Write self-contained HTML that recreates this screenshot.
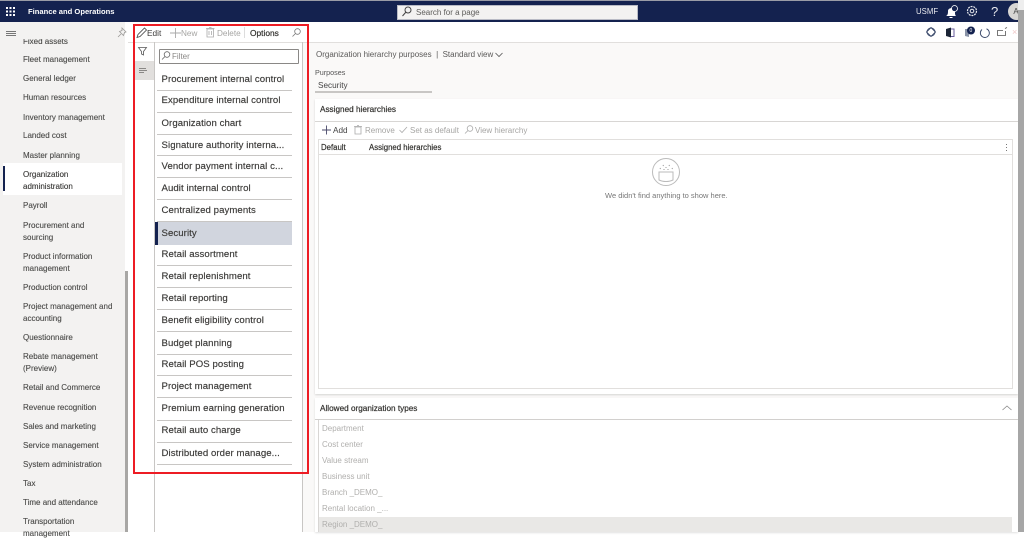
<!DOCTYPE html>
<html><head><meta charset="utf-8"><style>
html,body{margin:0;padding:0;width:1024px;height:532px;overflow:hidden;background:#fff;font-family:"Liberation Sans",sans-serif}
.a{position:absolute;white-space:nowrap}
.nav{position:absolute;left:23px;margin-top:1px;font-size:8px;line-height:12px;color:#4a4a48;white-space:nowrap;-webkit-text-stroke:.12px #4a4a48}
.li{position:absolute;left:161.5px;font-size:9.6px;line-height:12px;color:#3b3a38;white-space:nowrap;letter-spacing:.08px;-webkit-text-stroke:.16px #3b3a38}
.ln{position:absolute;left:157px;width:135px;height:1px;background:#c8c6c4}
.t{position:absolute;white-space:nowrap;font-size:8px;line-height:12px}
.g{color:#a6a5a3}
.org{position:absolute;left:322px;font-size:8px;line-height:12px;color:#b0afad;white-space:nowrap}
.m{-webkit-text-stroke:.2px currentColor}
svg{position:absolute;overflow:visible}
</style></head><body>
<div class="a" style="left:0;top:0;width:1024px;height:1px;background:#9a9ca6"></div>
<div class="a" style="left:0;top:1px;width:1024px;height:21px;background:#14224f"></div>
<svg style="left:6px;top:7px" width="10" height="10"><g fill="#fff"><rect x="0" y="0" width="2" height="2"/><rect x="3.500" y="0" width="2" height="2"/><rect x="7" y="0" width="2" height="2"/><rect x="0" y="3.500" width="2" height="2"/><rect x="3.500" y="3.500" width="2" height="2"/><rect x="7" y="3.500" width="2" height="2"/><rect x="0" y="7" width="2" height="2"/><rect x="3.500" y="7" width="2" height="2"/><rect x="7" y="7" width="2" height="2"/></g></svg>
<div class="t" style="left:28px;top:6px;color:#fff;font-weight:bold;font-size:7.600px">Finance and Operations</div>
<div class="a" style="left:397px;top:4.500px;width:239px;height:13px;background:#f3f2f1;border:1px solid #b9bbc5"></div>
<svg style="left:401px;top:6px" width="12" height="12" fill="none" stroke="#444"><circle cx="7" cy="4" r="3"/><path d="M5 6L1.500 10"/></svg>
<div class="t" style="left:416px;top:6.500px;color:#5d5c5a">Search for a page</div>
<div class="t" style="left:916px;top:6px;color:#e8e9ee;font-size:7.800px">USMF</div>
<svg style="left:945px;top:5px" width="14" height="14"><path d="M1 11C3 10 3 8 3 6C3 4 5 3 7 3C9 3 10 5 10 7C10 9 10 10 11 11Z" fill="#fff"/><circle cx="9.500" cy="3.500" r="3" fill="#14224f" stroke="#fff" stroke-width=".8"/><path d="M4.500 12h3v1h-3z" fill="#fff"/></svg>
<svg style="left:966px;top:5px" width="12" height="12" fill="none" stroke="#e8e9ee"><circle cx="6" cy="6" r="1.800"/><circle cx="6" cy="6" r="4.500" stroke-width="1.200" stroke-dasharray="2 .8"/></svg>
<div class="t" style="left:991px;top:4px;color:#e8e9ee;font-size:13px;line-height:15px">?</div>

<div class="a" style="left:0;top:22px;width:125px;height:510px;background:#f3f2f1"></div>
<svg style="left:6px;top:30.500px" width="11" height="5"><path d="M0 .5h10M0 2.500h10M0 4.500h10" stroke="#777" stroke-width="1"/></svg>
<svg style="left:117px;top:27px" width="11" height="11" fill="none" stroke="#9b9a98" stroke-width=".8"><path d="M5 1L9 5L7.500 5.500L6.500 8.500L2.500 4.500L5 3.500ZM4 7L1 10"/></svg>
<div class="a" style="left:0;top:39px;width:122px;height:8px;overflow:hidden"><div class="nav" style="top:-4px">Fixed assets</div></div>
<div class="a" style="left:3px;top:163px;width:119px;height:32px;background:#fff"></div>
<div class="a" style="left:3px;top:166px;width:2px;height:25px;background:#14224f"></div>
<div class="nav" style="top:53px">Fleet management</div>
<div class="nav" style="top:72px">General ledger</div>
<div class="nav" style="top:91px">Human resources</div>
<div class="nav" style="top:110.500px">Inventory management</div>
<div class="nav" style="top:129px">Landed cost</div>
<div class="nav" style="top:148.500px">Master planning</div>
<div class="nav" style="top:168px;color:#2f2e2c">Organization<br>administration</div>
<div class="nav" style="top:199px">Payroll</div>
<div class="nav" style="top:218.500px">Procurement and<br>sourcing</div>
<div class="nav" style="top:249.500px">Product information<br>management</div>
<div class="nav" style="top:280.500px">Production control</div>
<div class="nav" style="top:300px">Project management and<br>accounting</div>
<div class="nav" style="top:331px">Questionnaire</div>
<div class="nav" style="top:350px">Rebate management<br>(Preview)</div>
<div class="nav" style="top:381px">Retail and Commerce</div>
<div class="nav" style="top:400.500px">Revenue recognition</div>
<div class="nav" style="top:419.500px">Sales and marketing</div>
<div class="nav" style="top:438.500px">Service management</div>
<div class="nav" style="top:457.500px">System administration</div>
<div class="nav" style="top:476.500px">Tax</div>
<div class="nav" style="top:495.500px">Time and attendance</div>
<div class="nav" style="top:515px">Transportation<br>management</div>
<div class="a" style="left:125px;top:271px;width:3px;height:261px;background:#a8a7a5"></div>

<div class="a" style="left:128px;top:42px;width:896px;height:1px;background:#e1dfdd"></div>
<div class="a" style="left:154px;top:42px;width:1px;height:490px;background:#c8c6c4"></div>
<div class="a" style="left:302px;top:42px;width:1px;height:490px;background:#c8c6c4"></div>
<div class="a" style="left:303px;top:43px;width:715px;height:489px;background:#faf9f8"></div>
<div class="a" style="left:135px;top:61px;width:19px;height:19px;background:#e1dfdd"></div>
<svg style="left:138px;top:47px" width="10" height="9" fill="none" stroke="#555" stroke-width=".8"><path d="M.5 .5h8L5.500 4.500v3.500l-2-1v-2.500z"/></svg>
<svg style="left:139px;top:67.500px" width="9" height="6"><path d="M0 .5h7M0 2.500h8M0 4.500h5" stroke="#8a8886"/></svg>

<svg style="left:136px;top:27px" width="12" height="12" fill="none" stroke="#444" stroke-width=".8"><path d="M1 10.500L2 7.500L8.500 1L10.500 3L4 9.500Z"/></svg>
<div class="t" style="left:147px;top:27px;color:#3b3a39;font-size:8.300px">Edit</div>
<svg style="left:170px;top:28px" width="11" height="10"><path d="M5.500 0v10M0 5h11" stroke="#aaa" stroke-width=".9"/></svg>
<div class="t g" style="left:181px;top:27.500px;font-size:8.200px">New</div>
<svg style="left:206px;top:27px" width="9" height="11" fill="none" stroke="#aaa" stroke-width=".8"><path d="M1 2h6.500v8H1zM0 1.500h8.500M3 .5h2.500M3 4v4M5.500 4v4"/></svg>
<div class="t g" style="left:217px;top:27.500px;font-size:8.200px">Delete</div>
<div class="a" style="left:244px;top:27px;width:1px;height:11px;background:#ddd"></div>
<div class="t m" style="left:250px;top:27px;color:#33322f;font-size:8.400px">Options</div>
<svg style="left:291px;top:28px" width="11" height="11" fill="none" stroke="#777" stroke-width=".8"><circle cx="6.500" cy="3.500" r="2.800"/><path d="M4.500 5.500L1.500 8.500"/></svg>

<div class="a" style="left:159px;top:49px;width:138px;height:13px;border:1px solid #8a8886;border-radius:1px"></div>
<svg style="left:161px;top:51px" width="10" height="10" fill="none" stroke="#666" stroke-width=".8"><circle cx="6" cy="3.500" r="2.800"/><path d="M4 5.500L1 8.500"/></svg>
<div class="t" style="left:172px;top:51px;color:#8a8886">Filter</div>

<div class="a" style="left:155px;top:222px;width:137px;height:23px;background:#d1d5de"></div>
<div class="a" style="left:154.500px;top:222px;width:3px;height:23px;background:#14224f"></div>

<div class="li" style="top:73.500px">Procurement internal control</div><div class="ln" style="top:90px"></div>
<div class="li" style="top:95px">Expenditure internal control</div><div class="ln" style="top:112px"></div>
<div class="li" style="top:117.500px">Organization chart</div><div class="ln" style="top:134px"></div>
<div class="li" style="top:139.500px">Signature authority interna...</div><div class="ln" style="top:155px"></div>
<div class="li" style="top:161px">Vendor payment internal c...</div><div class="ln" style="top:177px"></div>
<div class="li" style="top:183px">Audit internal control</div><div class="ln" style="top:199px"></div>
<div class="li" style="top:205px">Centralized payments</div><div class="ln" style="top:221px"></div>
<div class="li" style="top:227.500px">Security</div>
<div class="li" style="top:249px">Retail assortment</div><div class="ln" style="top:265px"></div>
<div class="li" style="top:271px">Retail replenishment</div><div class="ln" style="top:287px"></div>
<div class="li" style="top:293px">Retail reporting</div><div class="ln" style="top:309px"></div>
<div class="li" style="top:315px">Benefit eligibility control</div><div class="ln" style="top:331px"></div>
<div class="li" style="top:337.500px">Budget planning</div><div class="ln" style="top:354px"></div>
<div class="li" style="top:359px">Retail POS posting</div><div class="ln" style="top:375px"></div>
<div class="li" style="top:381px">Project management</div><div class="ln" style="top:397px"></div>
<div class="li" style="top:403px">Premium earning generation</div><div class="ln" style="top:420px"></div>
<div class="li" style="top:425px">Retail auto charge</div><div class="ln" style="top:442px"></div>
<div class="li" style="top:447.500px">Distributed order manage...</div><div class="ln" style="top:464px"></div>

<div class="a" style="left:133px;top:24px;width:172px;height:446px;border:2px solid #ed1c24"></div>

<svg style="left:925px;top:26px" width="12" height="12" fill="none" stroke="#3b4a6b" stroke-width=".9"><circle cx="6" cy="6" r="4"/><path d="M6 1.500L10.500 6L6 10.500L1.500 6Z"/></svg>
<svg style="left:945px;top:27px" width="10" height="11"><path d="M1 2L6 .5V10.500L1 9Z" fill="#1c2536"/><path d="M6 2H9V9.500H6" fill="none" stroke="#6a5f9e"/></svg>
<svg style="left:964px;top:26px" width="12" height="12"><path d="M1 3H5V11L1 10Z" fill="#8a94a8"/><circle cx="7" cy="4.500" r="4" fill="#14224f"/></svg>
<div class="t" style="left:969.500px;top:28px;color:#fff;font-size:5px;line-height:6px">0</div>
<svg style="left:979px;top:27px" width="12" height="12" fill="none" stroke="#3b4a6b" stroke-width=".9"><path d="M3 2.500A4.500 4.500 0 1 0 7.500 1.800"/></svg>
<svg style="left:997px;top:27px" width="11" height="10" fill="none" stroke="#555" stroke-width=".8"><path d="M8.500 4V8.500H.5V3.500H6M8 1.500L10 .5"/></svg>
<div class="a" style="left:1012px;top:27px;color:#f0c8c8;font-size:9px;line-height:10px">×</div>

<div class="t" style="left:316px;top:49px;color:#5a5958">Organization hierarchy purposes &nbsp;|&nbsp; Standard view</div>
<svg style="left:495px;top:51.500px" width="8" height="6" fill="none" stroke="#555" stroke-width=".8"><path d="M.5 1L4 4.500L7.500 1"/></svg>
<div class="t" style="left:315px;top:67px;color:#555;font-size:7.200px">Purposes</div>
<div class="t" style="left:318px;top:80px;color:#444;font-size:8.200px">Security</div>
<div class="a" style="left:315px;top:91px;width:117px;height:2px;background:#c8c6c4"></div>

<div class="a" style="left:315px;top:99px;width:703px;height:295px;background:#fff;box-shadow:0 1px 2px rgba(0,0,0,.15)"></div>
<div class="t m" style="left:320px;top:104px;color:#33322f;font-size:8.200px">Assigned hierarchies</div>
<div class="a" style="left:315px;top:121px;width:703px;height:1px;background:#d8d6d4"></div>
<svg style="left:322px;top:125px" width="9" height="10"><path d="M4.500 .5v9M0 5h9" stroke="#4a4a6a" stroke-width=".9"/></svg>
<div class="t" style="left:333px;top:124.500px;color:#444;font-size:8.200px">Add</div>
<svg style="left:354px;top:125px" width="8" height="10" fill="none" stroke="#aaa" stroke-width=".8"><path d="M1 2h6v7H1zM0 1.500h8M3 .5h2"/></svg>
<div class="t g" style="left:365px;top:124.500px">Remove</div>
<svg style="left:399px;top:126px" width="9" height="8" fill="none" stroke="#aaa" stroke-width=".8"><path d="M.5 4L3 6.500L8 1"/></svg>
<div class="t g" style="left:410px;top:124.500px">Set as default</div>
<svg style="left:464px;top:125px" width="10" height="10" fill="none" stroke="#aaa" stroke-width=".8"><circle cx="6" cy="3.500" r="2.800"/><path d="M4 5.500L1 8.500"/></svg>
<div class="t g" style="left:475px;top:124.500px">View hierarchy</div>
<div class="a" style="left:318px;top:139px;width:693px;height:248px;border:1px solid #e1dfdd"></div>
<div class="a" style="left:319px;top:154px;width:693px;height:1px;background:#e1dfdd"></div>
<div class="t m" style="left:321px;top:141.500px;color:#33322f;font-size:7.800px">Default</div>
<div class="t m" style="left:369px;top:141.500px;color:#33322f;font-size:7.800px">Assigned hierarchies</div>
<svg style="left:1006px;top:144px" width="2" height="7"><path d="M.5 0v1M.5 3v1M.5 6v1" stroke="#777"/></svg>
<svg style="left:652px;top:158px" width="28" height="28" fill="none" stroke="#bbb"><circle cx="14" cy="14" r="13.500"/><path d="M7 14H21V22C17 24 11 24 7 22Z"/><path d="M8 11l.5-1M11 8l.5-1M14 10l0-1M17 7l.5 1M20 11l.5-1M12 12l0-1M16 12l0-1" stroke="#999"/></svg>
<div class="t" style="left:605px;top:189.500px;color:#777;font-size:7.500px">We didn't find anything to show here.</div>

<div class="a" style="left:315px;top:398px;width:703px;height:134px;background:#fff;box-shadow:0 1px 2px rgba(0,0,0,.12)"></div>
<div class="t m" style="left:320px;top:402.500px;color:#33322f;font-size:8.200px">Allowed organization types</div>
<svg style="left:1002px;top:405px" width="10" height="6" fill="none" stroke="#888" stroke-width=".8"><path d="M.5 5L5 1L9.500 5"/></svg>
<div class="a" style="left:315px;top:419px;width:703px;height:1px;background:#d2d0ce"></div>
<div class="a" style="left:318px;top:420px;width:1px;height:112px;background:#d8d6d4"></div>
<div class="a" style="left:319px;top:517px;width:693px;height:15px;background:#e9e8e6"></div>
<div class="org" style="top:423px">Department</div>
<div class="org" style="top:439px">Cost center</div>
<div class="org" style="top:455px">Value stream</div>
<div class="org" style="top:471px">Business unit</div>
<div class="org" style="top:487px">Branch _DEMO_</div>
<div class="org" style="top:503px">Rental location _...</div>
<div class="org" style="top:519px">Region _DEMO_</div>

<div class="a" style="left:1008px;top:3px;width:10px;height:18px;overflow:hidden"><div style="width:17px;height:17px;border-radius:50%;background:#d8d6d4;color:#444;font-size:8px;line-height:17px;text-align:center;text-indent:-1px">A</div></div>
<div class="a" style="left:1018px;top:0;width:6px;height:532px;background:#a6a6a6"></div>
<div class="a" style="left:1018px;top:0;width:6px;height:10px;background:#eee"></div>
</body></html>
